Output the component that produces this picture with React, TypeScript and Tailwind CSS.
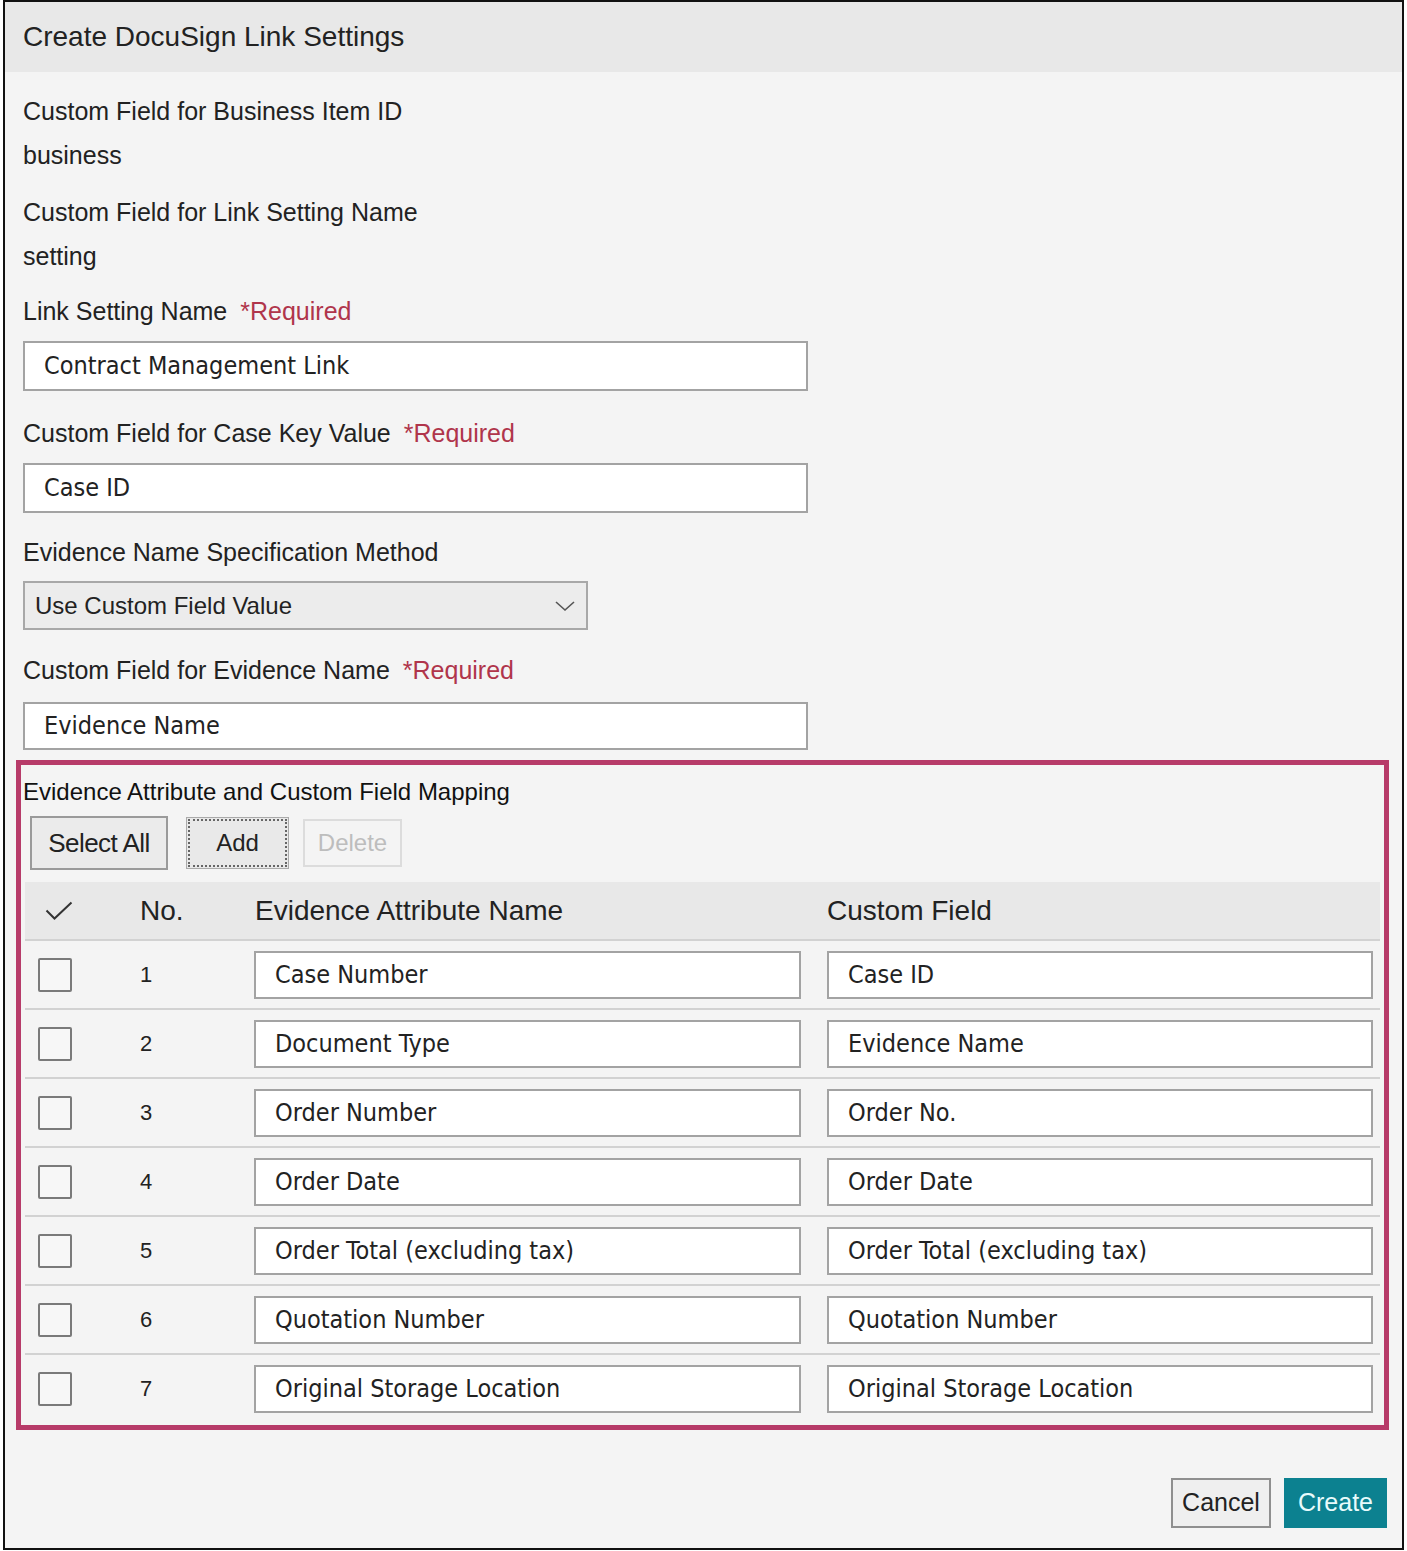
import React from "react";

const COND = "[font-family:'DejaVu_Sans_Condensed','DejaVu_Sans',sans-serif] [font-stretch:condensed]";

function TextBox({ value, className = "" }: { value: string; className?: string }) {
  return (
    <div
      className={`h-[48px] bg-white border-2 border-[#a3a3a3] flex items-center pl-[19px] text-[25px] text-[#222] ${COND} ${className}`}
    >
      {value}
    </div>
  );
}

function Label({ text, required = false }: { text: string; required?: boolean }) {
  return (
    <div className="h-[44px] flex items-center text-[25px] text-[#222]">
      <span>{text}</span>
      {required && <span className="ml-[13px] text-[#b0354b]">*Required</span>}
    </div>
  );
}

const rows = [
  ["Case Number", "Case ID"],
  ["Document Type", "Evidence Name"],
  ["Order Number", "Order No."],
  ["Order Date", "Order Date"],
  ["Order Total (excluding tax)", "Order Total (excluding tax)"],
  ["Quotation Number", "Quotation Number"],
  ["Original Storage Location", "Original Storage Location"],
];

export default function App() {
  return (
    <div className="w-[1407px] h-[1551px] bg-white [font-family:'Liberation_Sans',Arial,sans-serif]">
      <div className="ml-[3px] w-[1401px] h-[1550px] border-2 border-[#111] bg-[#f4f4f4] flex flex-col">
        <div className="h-[70px] bg-[#e8e8e8] pl-[18px] flex items-center text-[28px] text-[#222] shrink-0">
          Create DocuSign Link Settings
        </div>

        <div className="pl-[18px] mt-[18px] flex flex-col">
          <Label text="Custom Field for Business Item ID" />
          <Label text="business" />
          <div className="mt-[13px]">
            <Label text="Custom Field for Link Setting Name" />
          </div>
          <Label text="setting" />
          <div className="mt-[11px]">
            <Label text="Link Setting Name" required />
          </div>
          <TextBox value="Contract Management Link" className="mt-[7px] w-[785px] !h-[50px]" />
          <div className="mt-[21px]">
            <Label text="Custom Field for Case Key Value" required />
          </div>
          <TextBox value="Case ID" className="mt-[7px] w-[785px] !h-[50px]" />
          <div className="mt-[18px]">
            <Label text="Evidence Name Specification Method" />
          </div>
          <div className="mt-[6px] w-[565px] h-[49px] bg-[#ececec] border-2 border-[#a8a8a8] flex items-center justify-between pl-[10px] pr-[10px] text-[24px] text-[#222]">
            <span>Use Custom Field Value</span>
            <svg width="22" height="14" viewBox="0 0 22 14" fill="none">
              <path d="M2 3 L11 11 L20 3" stroke="#555" strokeWidth="1.6" />
            </svg>
          </div>
          <div className="mt-[19px]">
            <Label text="Custom Field for Evidence Name" required />
          </div>
          <TextBox value="Evidence Name" className="mt-[9px] w-[785px]" />
        </div>

        <div className="ml-[11px] mt-[10px] w-[1373px] h-[670px] border-[5px] border-[#b73b69] flex flex-col">
          <div className="mt-[5px] h-[44px] flex items-center pl-[2px] text-[24px] text-[#111]">
            Evidence Attribute and Custom Field Mapping
          </div>
          <div className="mt-[2px] flex items-center pl-[9px]">
            <div className="w-[138px] h-[54px] bg-[#ebebeb] border-2 border-[#9a9a9a] flex items-center justify-center text-[26px] text-[#222] tracking-[-0.02em]">
              Select All
            </div>
            <div className="ml-[18px] w-[103px] h-[52px] bg-[#e9e9e9] border border-[#aaa] p-[1px]">
              <div className="w-full h-full border-2 border-dotted border-[#666] flex items-center justify-center text-[24px] text-[#222]">
                Add
              </div>
            </div>
            <div className="ml-[14px] w-[99px] h-[48px] bg-[#f4f4f4] border-2 border-[#dcdcdc] flex items-center justify-center text-[24px] text-[#bdbdbd]">
              Delete
            </div>
          </div>

          <div className="mt-[12px] mx-[4px] flex flex-col">
            <div className="h-[57px] bg-[#e8e8e8] grid grid-cols-[115px_114px_573px_1fr] items-center text-[28px] text-[#222]">
              <div className="pl-[20px] flex items-center">
                <svg width="28" height="20" viewBox="0 0 28 20" fill="none">
                  <path d="M1.5 9.5 L9.5 17.5 L26.5 1.5" stroke="#333" strokeWidth="2" />
                </svg>
              </div>
              <div>No.</div>
              <div className="pl-[1px]">Evidence Attribute Name</div>
              <div>Custom Field</div>
            </div>
            {rows.map(([a, b], i) => (
              <div
                key={i}
                className="h-[69px] border-t-2 border-[#d2d2d2] grid grid-cols-[115px_114px_573px_1fr] items-center"
              >
                <div className="pl-[13px] flex items-center">
                  <div className="w-[34px] h-[34px] border-2 border-[#7a7a7a] rounded-[2px] bg-[#f7f7f7]" />
                </div>
                <div className="text-[22px] font-medium text-[#222]">{i + 1}</div>
                <div>
                  <TextBox value={a} className="w-[547px]" />
                </div>
                <div>
                  <TextBox value={b} className="w-[546px]" />
                </div>
              </div>
            ))}
          </div>
        </div>

        <div className="mt-[48px] flex justify-end pr-[15px]">
          <div className="w-[100px] h-[50px] bg-[#efefef] border-2 border-[#8f8f8f] flex items-center justify-center text-[25px] text-[#222]">
            Cancel
          </div>
          <div className="ml-[13px] w-[103px] h-[50px] bg-[#0c8190] flex items-center justify-center text-[25px] text-[#e8fbfc]">
            Create
          </div>
        </div>
      </div>
    </div>
  );
}
